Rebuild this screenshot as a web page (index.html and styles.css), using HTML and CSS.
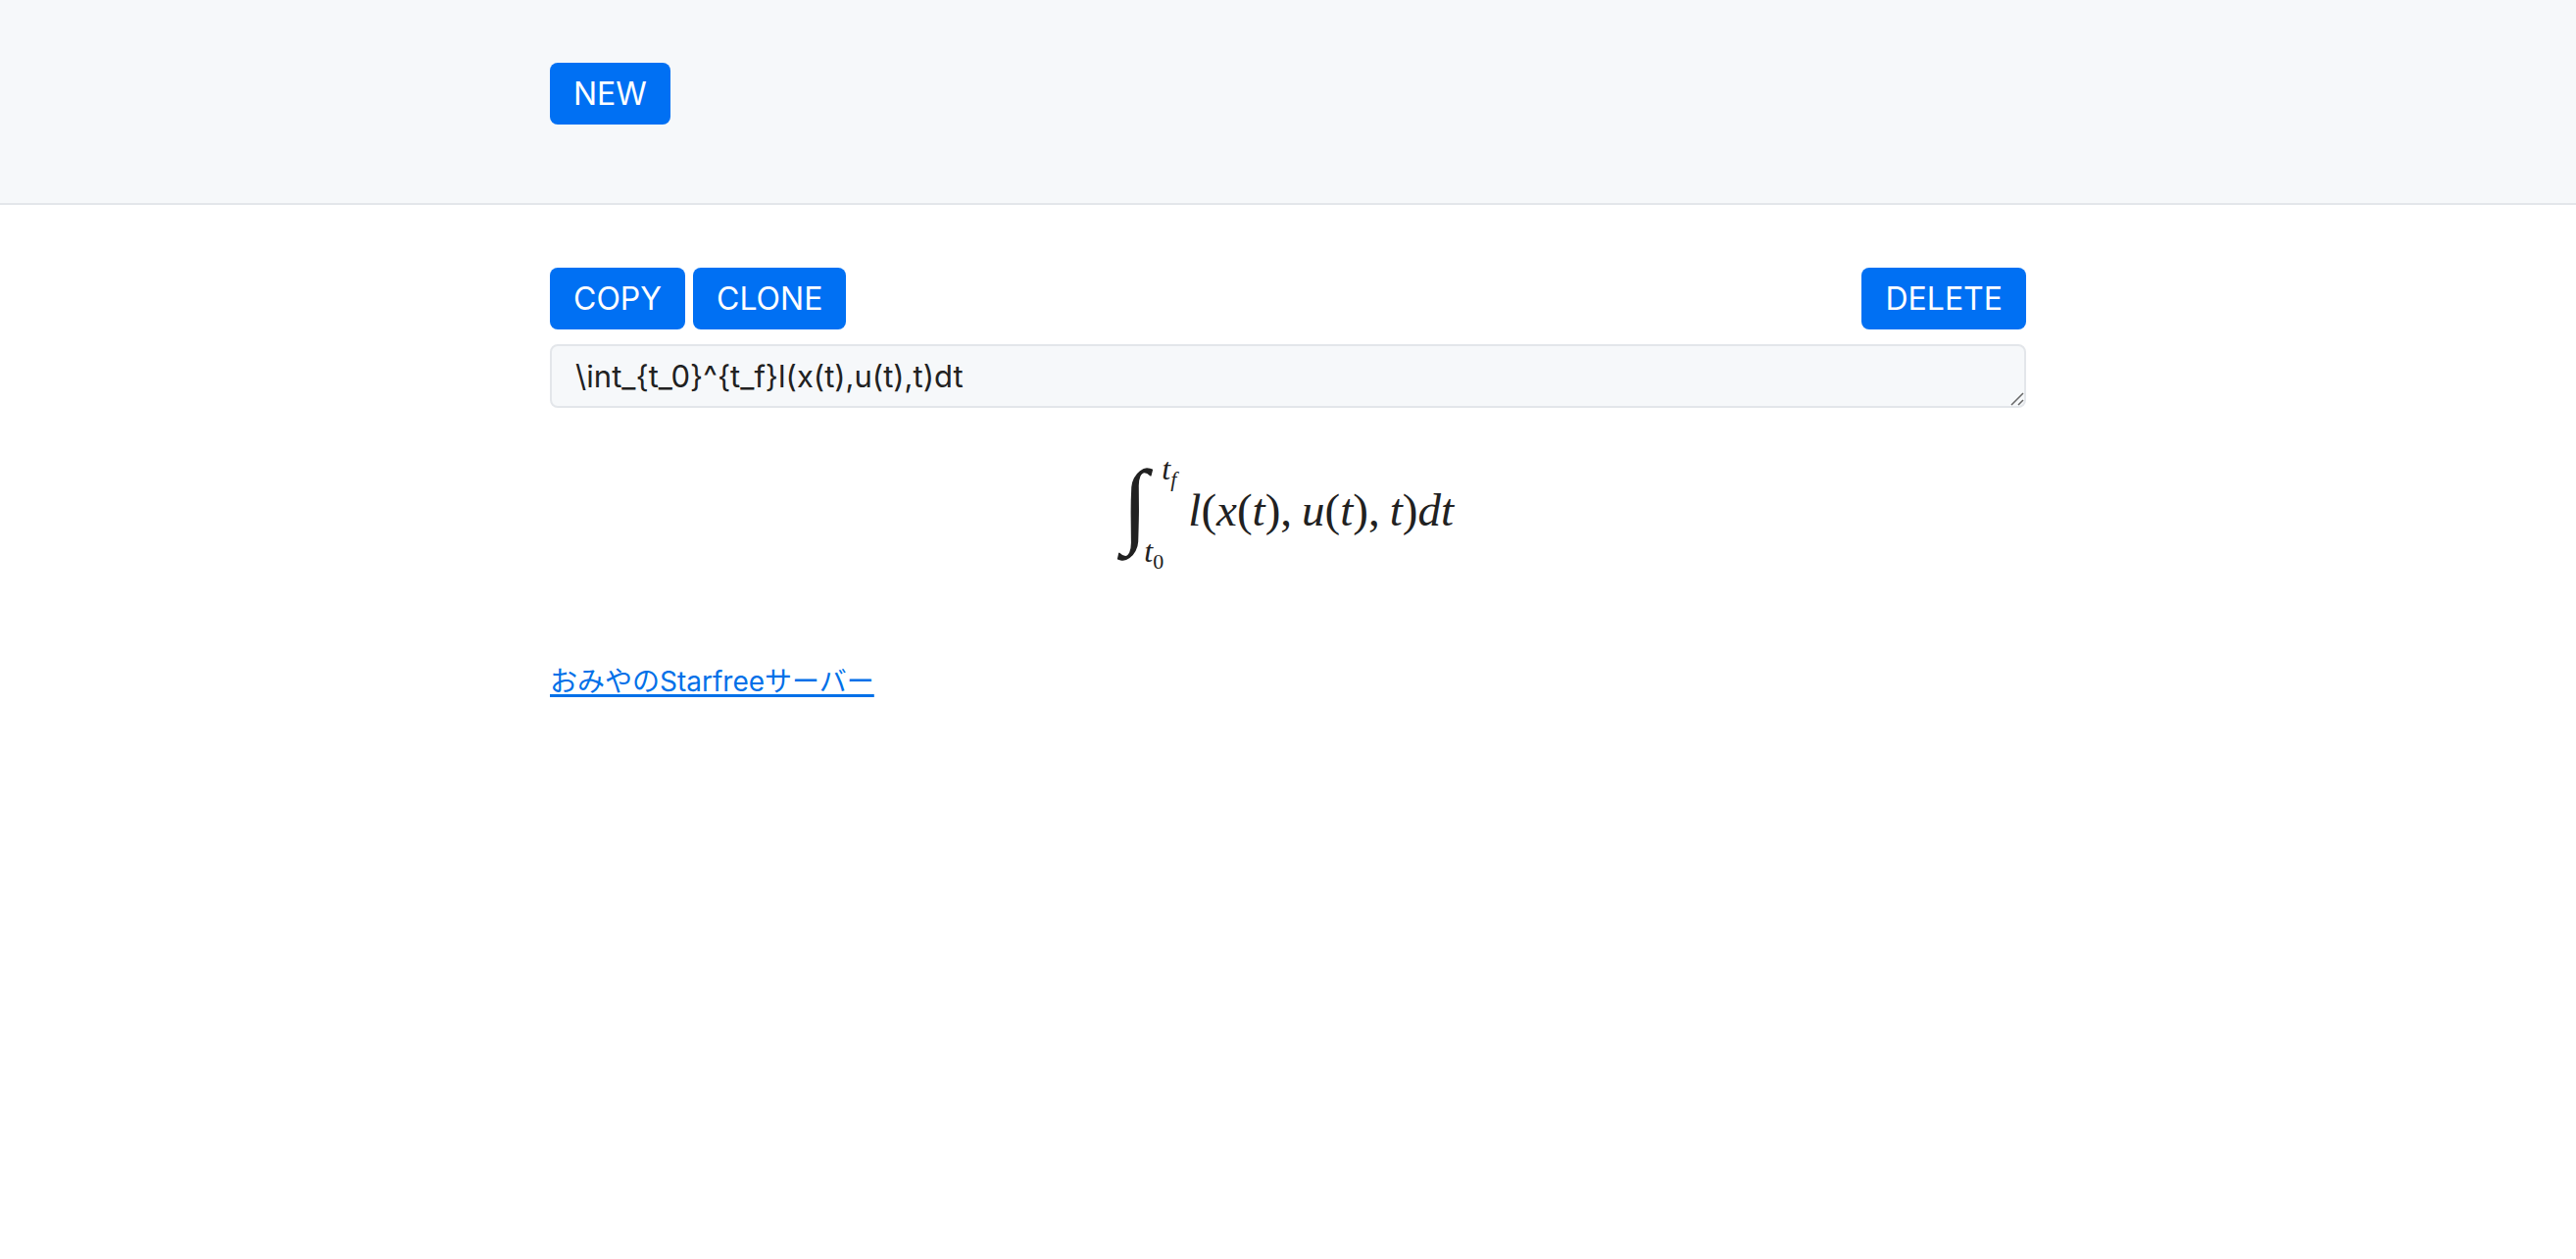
FILE: index.html
```html
<!DOCTYPE html>
<html lang="ja">
<head>
<meta charset="utf-8">
<meta name="viewport" content="width=device-width, initial-scale=1">
<title>TeX</title>
<link rel="stylesheet" href="styles.css">
</head>
<body>
<header class="header"><div class="wrap"><button type="button" class="button">NEW</button></div></header>
<main class="wrap main">
<section>
<div class="toolbar">
<button type="button" class="button">COPY</button>
<button type="button" class="button">CLONE</button>
<button type="button" class="button delete">DELETE</button>
</div>
<div class="field">
<textarea class="source" rows="1" aria-label="TeX" spellcheck="false">\int_{t_0}^{t_f}l(x(t),u(t),t)dt</textarea>
<svg class="grip" viewBox="0 0 14 14" aria-hidden="true"><path d="M1 13 13 1M8 13l5-5"/></svg>
</div>
<div class="formula">
<span class="integral">∫</span>
<span class="limits"><span class="upper"><i>t</i><sub><i>f</i></sub></span><span class="lower"><i>t</i><sub>0</sub></span></span>
<span class="body"><i>l</i>(<i>x</i>(<i>t</i>)<span class="comma">,</span><i>u</i>(<i>t</i>)<span class="comma">,</span><i>t</i>)<i>dt</i></span>
</div>
</section>
<a class="link" href="#">おみやのStarfreeサーバー</a>
</main>
</body>
</html>
```
FILE: styles.css
```css
* { box-sizing: border-box; }
body { margin: 0; background: #fff; color: #212121; font: 28px/42px Inter, "Noto Sans CJK JP", sans-serif; }
.wrap { width: 90%; max-width: 1506px; margin: 0 auto; }
.header { background: #f6f8fa; border-bottom: 2px solid #e3e6ea; padding: 64px 0 80px; }
.header .wrap { display: flex; }
.button { height: 63px; padding: 0 24px; border: 0; border-radius: 8px; background: #0070f3; color: #fff; font: 32px/64px Inter, sans-serif; }
.main { padding-top: 64px; }
.toolbar { display: flex; gap: 8px; margin-bottom: 15px; }
.delete { margin-left: auto; }
.field { position: relative; }
.source { display: block; width: 100%; height: 65px; padding: 10px 24px; border: 2px solid #e3e6ea; border-radius: 8px; background: #f6f8fa; color: #212121; font: 31px/42px Inter, sans-serif; resize: vertical; overflow: hidden; }
.source::-webkit-resizer { background: transparent; }
.grip { position: absolute; right: 2px; bottom: 2px; width: 14px; height: 14px; fill: none; stroke: #666; stroke-width: 1.5; pointer-events: none; }
.formula { display: flex; justify-content: center; align-items: center; height: 208px; font-family: "Liberation Serif", serif; line-height: 1; }
.integral { font-size: 96px; font-style: italic; padding-bottom: 12px; }
.limits { display: flex; flex-direction: column; justify-content: space-between; height: 116px; margin-left: -4px; font-size: 32px; }
.limits sub { font-size: 22px; line-height: 0; }
.upper { padding-left: 18px; }
.body { font-size: 47px; padding-left: 12px; }
.comma { padding-right: 10px; }
.link { display: inline-block; margin-top: 50px; color: #0070e8; text-decoration-thickness: 3px; text-underline-offset: 3px; }
```
